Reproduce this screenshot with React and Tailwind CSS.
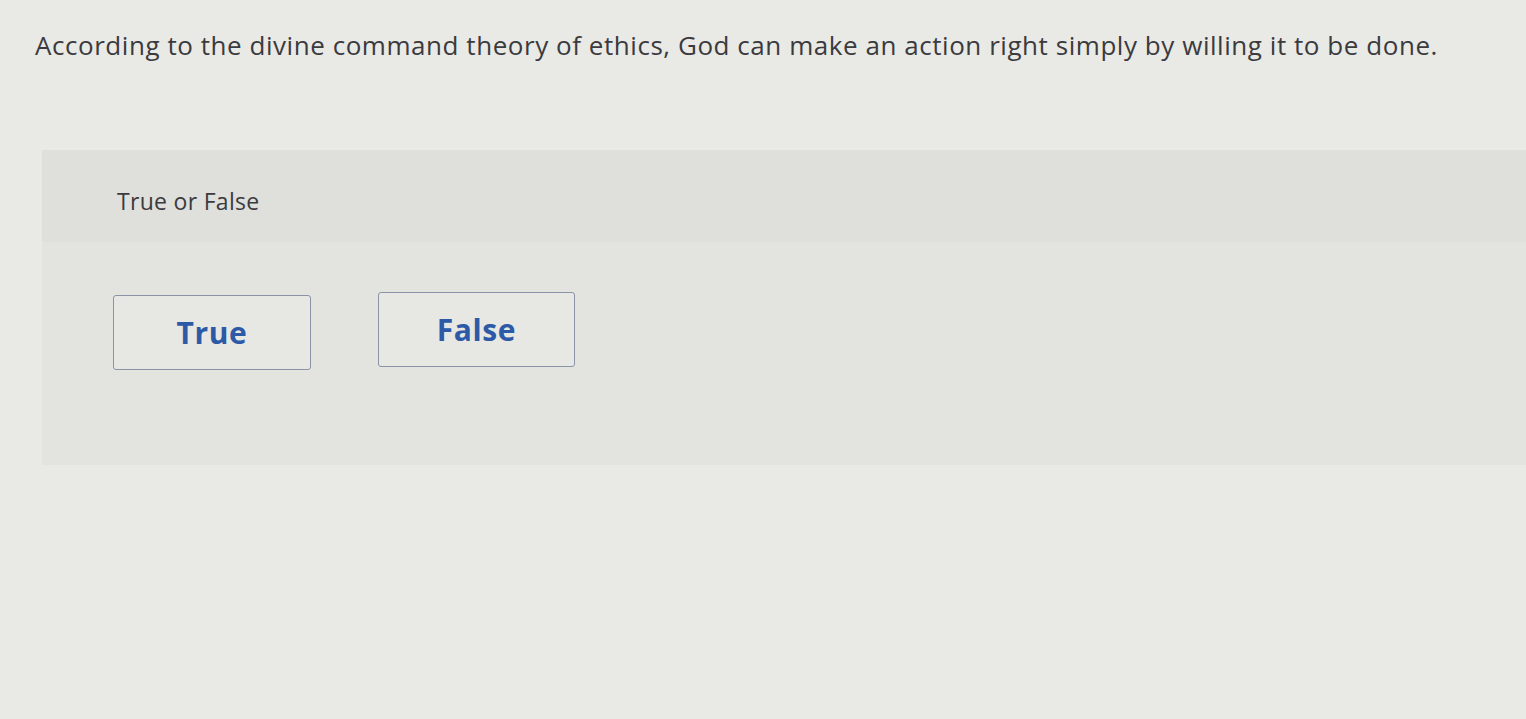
import React from "react";

const App = () => {
  return (
    <div className="min-h-[719px] w-[1526px] bg-[#e9e9e6] font-['Open_Sans','Noto_Sans',sans-serif] text-[#3b3b3e] overflow-hidden">
      {/* Question */}
      <div className="pl-[35px] pt-[27px]">
        <p className="text-[26px] leading-[36px] tracking-[0.55px]">
          According to the divine command theory of ethics, God can make an action right simply by willing it to be done.
        </p>
      </div>

      {/* Answer panel */}
      <div className="ml-[42px] mt-[87px] h-[315px] bg-[#e3e3e0]">
        <div className="h-[92px] bg-[#dfdfdc] pl-[75px] pt-[37px]">
          <span className="text-[23px] leading-[28px] tracking-[0.3px]">True or False</span>
        </div>
        <div className="flex gap-[67px] pl-[71px] pt-[53px]">
          <button
            type="button"
            className="w-[198px] h-[75px] border border-[#8b93a6] rounded-[3px] bg-[#e7e7e4] text-[#2d5aa6] text-[30px] tracking-[0.6px] font-bold"
          >
            True
          </button>
          <button
            type="button"
            className="w-[197px] h-[75px] -mt-[3px] border border-[#8b93a6] rounded-[3px] bg-[#e7e7e4] text-[#2d5aa6] text-[30px] tracking-[0.6px] font-bold"
          >
            False
          </button>
        </div>
      </div>
    </div>
  );
};

export default App;
